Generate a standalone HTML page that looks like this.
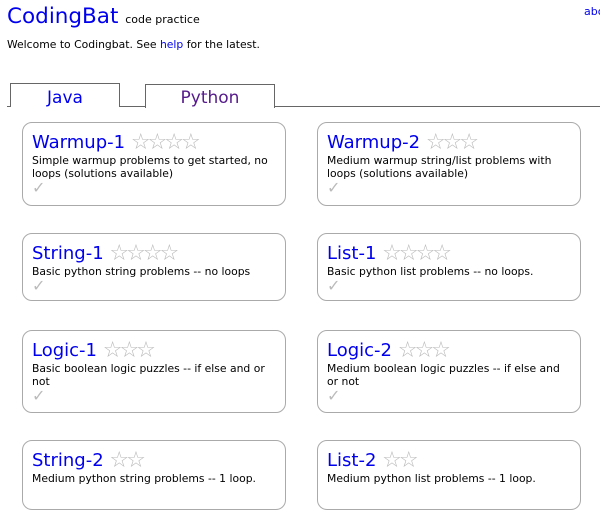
<!DOCTYPE html>
<html><head><meta charset="utf-8"><style>
body{margin:0;width:600px;height:484px;overflow:hidden;background:#fff;font-family:"DejaVu Sans","Liberation Sans",sans-serif;font-size:10px;color:#000;position:relative}
.a{position:absolute}
.title{left:7px;top:4px;font-size:21.5px;color:#0000ee;white-space:nowrap}
.title span{font-size:11px;color:#000}
.about{left:584px;top:5px;color:#0000ee;font-size:11px}
.welcome{left:7px;top:38px;font-size:10.8px;white-space:nowrap}
.welcome b{font-weight:normal;color:#0000ee}
.tab{border:1px solid #666;border-bottom:none;background:#fff;text-align:center;font-size:17px;line-height:26px}
.line{left:7px;right:0;top:106px;border-top:1px solid #666}
.card{width:264px;border:1px solid #aaa;border-radius:10px;padding:0 0 0 9px;box-sizing:border-box}
.card h{display:block;font-size:18px;color:#0000ee;margin-top:9px;line-height:22px;white-space:nowrap}
.card h i{font-style:normal;color:#bbb;font-size:22px;letter-spacing:-3px;vertical-align:-1px}
.card p{margin:0;font-size:10.8px;line-height:13px;padding-right:6px}
.card .c{color:#bbb;font-size:16px;line-height:15px}
</style></head><body>
<div class="a title">CodingBat <span>code practice</span></div>
<div class="a about">abo</div>
<div class="a welcome">Welcome to Codingbat. See <b>help</b> for the latest.</div>
<div class="a line"></div>
<div class="a tab" style="left:10px;top:83px;width:108px;height:23px;color:#0000ee;line-height:28px">Java</div>
<div class="a tab" style="left:145px;top:84px;width:128px;height:23px;color:#551a8b">Python</div>

<div class="a card" style="left:22px;top:122px;height:84px"><h>Warmup-1 <i>☆☆☆☆</i></h><p>Simple warmup problems to get started, no loops (solutions available)</p><div class="c">✓</div></div>
<div class="a card" style="left:317px;top:122px;height:84px"><h>Warmup-2 <i>☆☆☆</i></h><p>Medium warmup string/list problems with loops (solutions available)</p><div class="c">✓</div></div>

<div class="a card" style="left:22px;top:233px;height:68px"><h>String-1 <i>☆☆☆☆</i></h><p>Basic python string problems -- no loops</p><div class="c">✓</div></div>
<div class="a card" style="left:317px;top:233px;height:68px"><h>List-1 <i>☆☆☆☆</i></h><p>Basic python list problems -- no loops.</p><div class="c">✓</div></div>

<div class="a card" style="left:22px;top:330px;height:83px"><h>Logic-1 <i>☆☆☆</i></h><p>Basic boolean logic puzzles -- if else and or not</p><div class="c">✓</div></div>
<div class="a card" style="left:317px;top:330px;height:83px"><h>Logic-2 <i>☆☆☆</i></h><p>Medium boolean logic puzzles -- if else and or not</p><div class="c">✓</div></div>

<div class="a card" style="left:22px;top:440px;height:70px"><h>String-2 <i>☆☆</i></h><p>Medium python string problems -- 1 loop.</p></div>
<div class="a card" style="left:317px;top:440px;height:70px"><h>List-2 <i>☆☆</i></h><p>Medium python list problems -- 1 loop.</p></div>
</body></html>
